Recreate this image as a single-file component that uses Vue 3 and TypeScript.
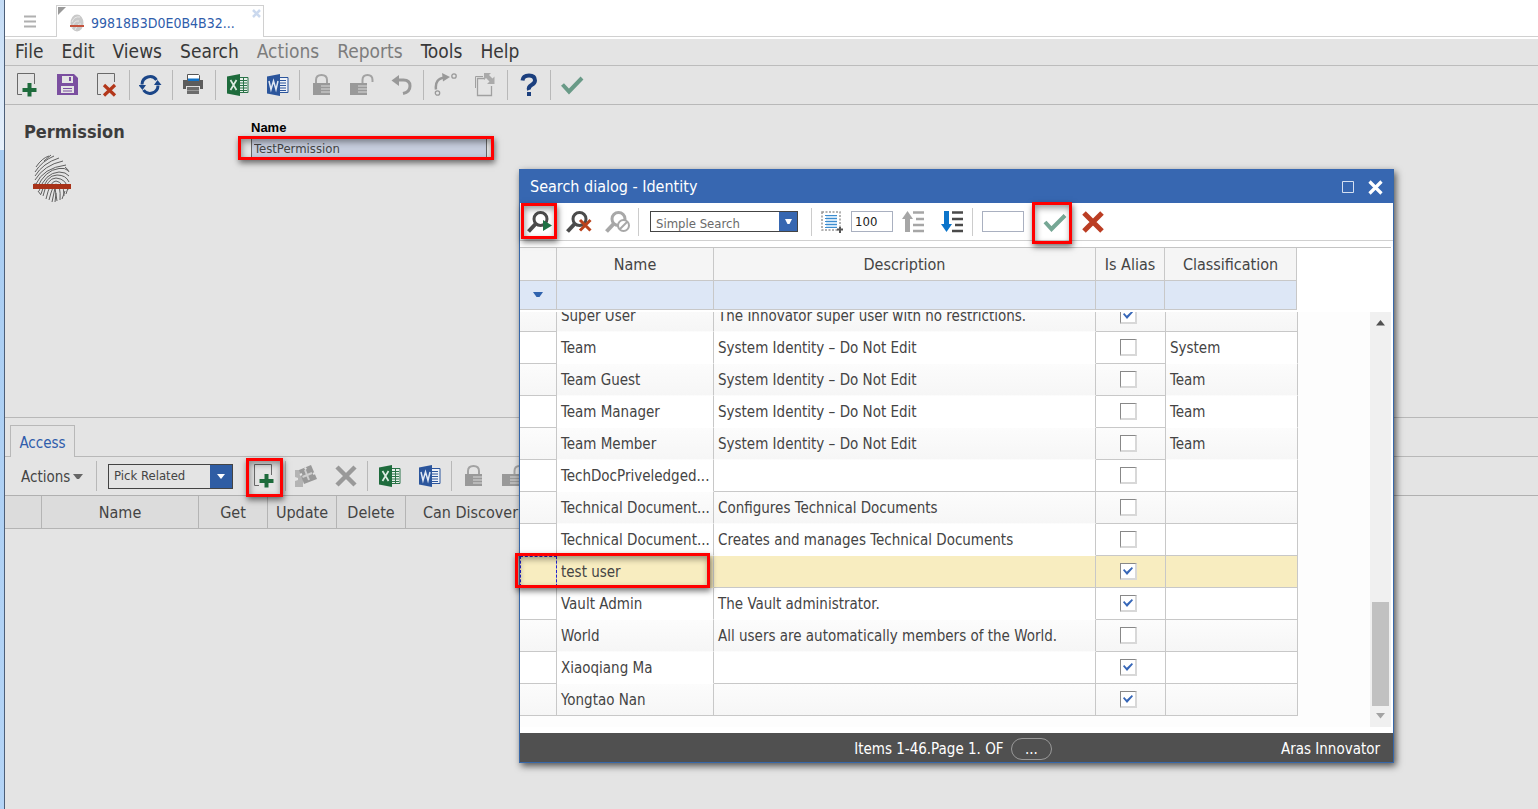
<script setup lang="ts">
import { ref } from 'vue'

interface ToolItem {
  icon?: string
  label?: string
  sep?: 'flush' | 'tight' | 'wide'
  disabled?: boolean
}

interface Identity {
  name: string
  description: string
  alias: boolean
  classification: string
  selected?: boolean
}

const menu = [
  { label: 'File', disabled: false },
  { label: 'Edit', disabled: false },
  { label: 'Views', disabled: false },
  { label: 'Search', disabled: false },
  { label: 'Actions', disabled: true },
  { label: 'Reports', disabled: true },
  { label: 'Tools', disabled: false },
  { label: 'Help', disabled: false },
]

const mainTools: ToolItem[] = [
  { icon: 'new', label: 'New' },
  { icon: 'save', label: 'Save' },
  { icon: 'delete', label: 'Delete' },
  { sep: 'tight' },
  { icon: 'refresh', label: 'Refresh' },
  { sep: 'tight' },
  { icon: 'print', label: 'Print' },
  { sep: 'wide' },
  { icon: 'excel', label: 'Export to Excel' },
  { icon: 'word', label: 'Export to Word' },
  { sep: 'wide' },
  { icon: 'lock', label: 'Lock', disabled: true },
  { icon: 'unlock', label: 'Unlock', disabled: true },
  { icon: 'undo', label: 'Undo', disabled: true },
  { sep: 'wide' },
  { icon: 'promote', label: 'Promote', disabled: true },
  { icon: 'revision', label: 'Revisions', disabled: true },
  { sep: 'tight' },
  { icon: 'help', label: 'Help' },
  { sep: 'tight' },
  { icon: 'check', label: 'Done' },
]

const relationTools: ToolItem[] = [
  { icon: 'new', label: 'New relationship' },
  { sep: 'flush' },
  { icon: 'pick', label: 'Pick related', disabled: true },
  { icon: 'remove', label: 'Remove', disabled: true },
  { sep: 'wide' },
  { icon: 'excel', label: 'Export to Excel' },
  { icon: 'word', label: 'Export to Word' },
  { sep: 'wide' },
  { icon: 'lock', label: 'Lock', disabled: true },
  { icon: 'unlock', label: 'Unlock', disabled: true },
]

const permissionName = ref('TestPermission')
const pageSize = ref('100')
const pageNumber = ref('')

const doNotEdit = 'System Identity – Do Not Edit'
const identities = ref<Identity[]>([
  { name: 'Super User', description: 'The Innovator super user with no restrictions.', alias: true, classification: '' },
  { name: 'Team', description: doNotEdit, alias: false, classification: 'System' },
  { name: 'Team Guest', description: doNotEdit, alias: false, classification: 'Team' },
  { name: 'Team Manager', description: doNotEdit, alias: false, classification: 'Team' },
  { name: 'Team Member', description: doNotEdit, alias: false, classification: 'Team' },
  { name: 'TechDocPriveledged...', description: '', alias: false, classification: '' },
  { name: 'Technical Document...', description: 'Configures Technical Documents', alias: false, classification: '' },
  { name: 'Technical Document...', description: 'Creates and manages Technical Documents', alias: false, classification: '' },
  { name: 'test user', description: '', alias: true, classification: '', selected: true },
  { name: 'Vault Admin', description: 'The Vault administrator.', alias: true, classification: '' },
  { name: 'World', description: 'All users are automatically members of the World.', alias: false, classification: '' },
  { name: 'Xiaoqiang Ma', description: '', alias: true, classification: '' },
  { name: 'Yongtao Nan', description: '', alias: true, classification: '' },
])
</script>

<template>
  <div class="page">
    <svg class="sprite" aria-hidden="true">
      <symbol id="i-new" viewBox="0 0 24 24">
        <path d="M6 21.500H1.500V.5H18.500V11" fill="none" stroke="#6a6a6a" />
        <path d="M11.500 10h4v5h5v4h-5v4.500h-4V19h-5v-4h5z" fill="#1e6b3c" />
      </symbol>
      <symbol id="i-save" viewBox="0 0 24 24">
        <path d="M1 1h17l4 4v17H1z" fill="#7b4fa0" />
        <path d="M6 3h11v7H6zM5 13h13v7H5z" fill="#e4e4e4" />
        <path d="M13 4h2v4h-2zM7 15h9v1H7zM7 17.500h9v1H7z" fill="#7b4fa0" />
      </symbol>
      <symbol id="i-delete" viewBox="0 0 24 24">
        <path d="M5 21.500H1.500V.5H18.500V9" fill="none" stroke="#6a6a6a" />
        <path d="M8 12l11 10.500M19 12L8 22.500" stroke="#b3371a" stroke-width="3.200" />
      </symbol>
      <symbol id="i-refresh" viewBox="0 0 24 24">
        <path d="M3 11.500a8 8 0 0 1 14.500-4.500M19 12.500a8 8 0 0 1-14.500 4.500" fill="none" stroke="#1b4688" stroke-width="3" />
        <path d="M-.5 12h7.500l-3.500 5zM22.500 12h-7.500l3.500-5z" fill="#1b4688" />
      </symbol>
      <symbol id="i-print" viewBox="0 0 24 24">
        <path d="M1 7h20v9h-3v-3H4v3H1z" fill="#5c5c5c" />
        <path d="M5.500 1.500h11l1 1v5h-12z" fill="#fff" stroke="#555" />
        <path d="M6 5.500h11v2.500H6z" fill="#1173c7" />
        <path d="M5 13h12v8H5z" fill="#6c6c6c" />
        <path d="M5 13.500h12" stroke="#ddd" />
        <path d="M5 17.500h12" stroke="#999" />
      </symbol>
      <symbol id="i-excel" viewBox="0 0 24 24">
        <path d="M13 4.500h9v15h-9z" fill="#e8f0ea" stroke="#2a7348" />
        <path d="M14 7.500h7M14 10h7M14 12.500h7M14 15h7M14 17.500h7M17.500 5v14" stroke="#2a7348" />
        <path d="M1 3.500L14 1v22L1 20.500z" fill="#1e6b3c" />
        <path d="M4.500 7l6 10M10.500 7l-6 10" stroke="#dcebe1" stroke-width="1.700" />
      </symbol>
      <symbol id="i-word" viewBox="0 0 24 24">
        <path d="M13 4.500h9v15h-9z" fill="#edf1f8" stroke="#2b559c" />
        <path d="M14 7.500h6M14 10h6M14 12.500h6M14 15h6M14 17.500h6" stroke="#2b559c" />
        <path d="M1 3.500L14 1v22L1 20.500z" fill="#2b559c" />
        <path d="M3 8l2 8.500L7.500 8l2.500 8.500L12 8" fill="none" stroke="#dfe7f3" stroke-width="1.500" />
      </symbol>
      <symbol id="i-lock" viewBox="0 0 24 24">
        <path d="M6 11V7q0-5 5.500-5T17 7v4" fill="none" stroke="#a3a3a3" stroke-width="2" />
        <path d="M3 10h17v12H3z" fill="#999" />
        <path d="M11 13h9M11 16h9M11 19h9" stroke="#d9d9d9" />
      </symbol>
      <symbol id="i-unlock" viewBox="0 0 24 24">
        <path d="M12.500 11V7q0-5 5-5t5 5v2" fill="none" stroke="#a3a3a3" stroke-width="2" />
        <path d="M0 10h17v12H0z" fill="#999" />
        <path d="M8 13h9M8 16h9M8 19h9" stroke="#d9d9d9" />
      </symbol>
      <symbol id="i-undo" viewBox="0 0 24 24">
        <path d="M7 7h6.500q6.500 0 6.500 6t-7 7.500" fill="none" stroke="#999" stroke-width="3" />
        <path d="M1.500 7.500L9 2v11z" fill="#999" />
      </symbol>
      <symbol id="i-promote" viewBox="0 0 24 24">
        <path d="M2 16.500Q.5 5.500 11 4.500" fill="none" stroke="#999" stroke-width="2.500" />
        <path d="M8 0l8 4-7 4.500z" fill="#999" />
        <circle cx="3.500" cy="20" r="2.200" fill="none" stroke="#999" stroke-width="1.300" />
        <circle cx="20" cy="3" r="2.200" fill="none" stroke="#999" stroke-width="1.300" />
      </symbol>
      <symbol id="i-revision" viewBox="0 0 24 24">
        <path d="M1.500 15V3.500H9" fill="none" stroke="#a0a0a0" />
        <path d="M11 5.500H3.500v17h14V13" fill="none" stroke="#a0a0a0" stroke-width="1.300" />
        <path d="M10 0h7l-2 2 3.500 3.500 2-2V11h-7.500l2.500-2.500-3.500-3.500-2 2z" fill="#aaa" />
      </symbol>
      <symbol id="i-help" viewBox="0 0 24 24">
        <path d="M5.500 7.500Q6 2.500 12 2.500t6 5q0 2.500-3.500 4.500T12 17" fill="none" stroke="#1b3f7e" stroke-width="4" />
        <path d="M10 19h4v4h-4z" fill="#1b3f7e" />
      </symbol>
      <symbol id="i-check" viewBox="0 0 24 24">
        <path d="M2.500 11.500l6.500 7L22 5" fill="none" stroke="#699a87" stroke-width="4" />
      </symbol>
      <symbol id="i-pick" viewBox="0 0 24 24">
        <path d="M1 6h8v17H1v-6l3-1v-2l-3-1z" fill="#b4b4b4" />
        <path d="M5 6l12-5 6 14-13 5z" fill="#999" />
        <path d="M11 6l4 10M8.500 13l9.500-4" stroke="#cfcfcf" stroke-width="2" />
        <path d="M11 3.500l1 2M21 9l-2 1M6 11l2-1" stroke="#e4e4e4" stroke-width="2" />
      </symbol>
      <symbol id="i-remove" viewBox="0 0 24 24">
        <path d="M3 3l18 18M21 3L3 21" stroke="#999" stroke-width="4.500" />
      </symbol>
      <symbol id="i-finger" viewBox="0 0 40 50">
        <g fill="none" stroke="#5f5f5f">
          <path d="M4 13Q10 4 17 2M3 18Q10 7 22 2M3 22Q11 9 27 4M3 26Q12 11 31 7M4 30Q11 14 34 11M5 34Q13 16 27 14.500q6-1 9 2" />
          <path d="M7 37q6-18 20-19 7 0 10 4M9 40q5-19 16-19 9 0 12 7M11 42q4-18 13-18 11 1 12 12M14 45q4-18 10-18 8 1 8 15M17 46q4-16 7-16 5 1 4 16M20 48l3-14 2 13" />
          <path d="M12 7l7-6M33 13q3 2 4 5M3 29v5M9 41l-3-4M30 45l3-8M23 48l1-9M34 40l2-6" />
        </g>
        <path d="M1 30h38v5H1z" fill="#a83218" />
      </symbol>
      <symbol id="i-mag" viewBox="0 0 26 24">
        <circle cx="13.500" cy="9" r="6.500" fill="none" stroke="currentColor" stroke-width="3" />
        <path d="M9 13.500L1.500 21.500" stroke="currentColor" stroke-width="4" />
      </symbol>
    </svg>

    <div class="edge"></div>

    <main class="window">
      <header class="tabs">
        <button class="burger" aria-label="Menu">
          <svg width="12" height="13"><path d="M0 1.500h12M0 6.500h12M0 11.500h12" stroke="#b0b0b0" stroke-width="2" /></svg>
        </button>
        <div class="tab">
          <svg class="tab-finger" width="16" height="18" viewBox="0 0 16 18">
            <ellipse cx="8" cy="9" rx="6.500" ry="8.500" fill="#c9c9c9" />
            <path d="M3 8q2-6 8-5M3 14q2-8 7-7M6 16q3-7 6-6" fill="none" stroke="#e9e9e9" />
            <path d="M1 11h14v2H1z" fill="#c4533d" />
          </svg>
          <a href="#" class="tab-title">99818B3D0E0B4B32...</a>
          <button class="tab-close" aria-label="Close tab">
            <svg width="9" height="9"><path d="M1 1l7 7M8 1L1 8" stroke="#cbd9ee" stroke-width="2.500" /></svg>
          </button>
        </div>
      </header>

      <nav class="menu">
        <button v-for="m in menu" :key="m.label" :disabled="m.disabled">{{ m.label }}</button>
      </nav>

      <div class="tools main-tools">
        <template v-for="(t, i) in mainTools" :key="i">
          <span v-if="t.sep" class="sep" :class="t.sep"></span>
          <button v-else class="tool" :aria-label="t.label" :disabled="t.disabled">
            <svg width="24" height="24"><use :href="'#i-' + t.icon" /></svg>
          </button>
        </template>
      </div>

      <section class="form">
        <div class="form-title">
          <h1>Permission</h1>
          <svg width="40" height="50"><use href="#i-finger" /></svg>
        </div>
        <div class="field">
          <label for="perm-name">Name</label>
          <div class="field-box">
            <input id="perm-name" v-model="permissionName" type="text" />
            <span class="mark mark-name"></span>
          </div>
        </div>
      </section>

      <section class="relations">
        <div class="rel-tabs"><button class="rel-tab">Access</button></div>
        <div class="rel-bar">
          <button class="actions">Actions
            <svg width="10" height="6"><path d="M0 0h10L6 5H4z" fill="#666" /></svg>
          </button>
          <span class="sep rel-sep"></span>
          <span class="select rel-select">
            <select aria-label="Relationship mode"><option>Pick Related</option></select>
            <span class="arrow"><svg width="8" height="5"><path d="M0 0h8L4 5z" fill="#fff" /></svg></span>
          </span>
          <div class="tools rel-tools">
            <template v-for="(t, i) in relationTools" :key="i">
              <span v-if="t.sep" class="sep" :class="t.sep"></span>
              <button v-else class="tool" :aria-label="t.label" :disabled="t.disabled">
                <svg width="24" height="24"><use :href="'#i-' + t.icon" /></svg>
                <span v-if="i === 0" class="mark mark-add"></span>
              </button>
            </template>
          </div>
        </div>
        <table class="rel-grid">
          <colgroup><col class="r0" /><col class="r1" /><col class="r2" /><col class="r2" /><col class="r2" /><col class="r3" /></colgroup>
          <thead>
            <tr><th></th><th>Name</th><th>Get</th><th>Update</th><th>Delete</th><th>Can Discover</th></tr>
          </thead>
        </table>
      </section>
    </main>

    <section class="dialog" role="dialog" aria-labelledby="dlg-title">
      <header class="dlg-head">
        <h2 id="dlg-title">Search dialog - Identity</h2>
        <button aria-label="Maximize"><svg width="12" height="12"><path d="M.5.5h11v11H.5z" fill="none" stroke="#d5e0f1" /></svg></button>
        <button aria-label="Close"><svg width="15" height="15"><path d="M1.500 1.500l12 12M13.500 1.500l-12 12" stroke="#fff" stroke-width="3.200" /></svg></button>
      </header>

      <div class="dlg-tools">
        <button class="mag" aria-label="Run search">
          <svg width="26" height="24"><use href="#i-mag" /><path d="M16 10l9 5.500-9 5.500z" fill="#1e7145" /></svg>
          <span class="mark mark-search"></span>
        </button>
        <button class="mag" aria-label="Clear search">
          <svg width="26" height="24"><use href="#i-mag" /><path d="M14 10l10.500 10.500M24.500 10L14 20.500" stroke="#b9421c" stroke-width="3" /></svg>
        </button>
        <button class="mag off" aria-label="Stop search" disabled>
          <svg width="26" height="24">
            <use href="#i-mag" />
            <circle cx="18.500" cy="15.500" r="5.500" fill="#fff" stroke="#a8a8a8" stroke-width="2" />
            <path d="M15 19l7-7" stroke="#a8a8a8" stroke-width="2" />
          </svg>
        </button>
        <span class="dsep s1"></span>
        <span class="select dlg-select">
          <select aria-label="Search mode"><option>Simple Search</option></select>
          <span class="arrow"><svg width="7" height="5"><path d="M0 0h7L4.500 5h-2z" fill="#fff" /></svg></span>
        </span>
        <span class="dsep s2"></span>
        <svg class="page-icon" width="22" height="22">
          <path d="M1 1h18v18H1z" fill="none" stroke="#999" stroke-width="1.500" stroke-dasharray="2 1.500" />
          <path d="M5 4h11v13H5z" fill="#cfe5f7" />
          <path d="M4 4.500h12M4 7.500h12M4 10.500h12M4 13.500h12M4 16.500h12" stroke="#3d8dcf" />
          <path d="M16 18.500h6M19 16v6" stroke="#555" stroke-width="2" />
        </svg>
        <input v-model="pageSize" class="size" type="text" aria-label="Page size" />
        <button class="prev" aria-label="Previous page" disabled>
          <svg width="22" height="22"><path d="M5.500 0L11 8H8v13H3V8H0z" fill="#a6a6a6" /><path d="M11 1.500h11M14 8h8M11 14h11M11 20h11" stroke="#a6a6a6" stroke-width="2.500" /></svg>
        </button>
        <button class="next" aria-label="Next page">
          <svg width="22" height="22"><path d="M5.500 21L11 13H8V0H3v13H0z" fill="#0b74ca" /><path d="M11 1.500h11M11 8h11M14 14h8M11 20h11" stroke="#4a4a4a" stroke-width="2.500" /></svg>
        </button>
        <span class="dsep s3"></span>
        <input v-model="pageNumber" class="size" type="text" aria-label="Page number" />
        <button class="ok" aria-label="Accept">
          <svg width="24" height="24"><path d="M2 12l6.500 7L22 5.500" fill="none" stroke="#76a795" stroke-width="4" /></svg>
          <span class="mark mark-ok"></span>
        </button>
        <button class="cancel" aria-label="Cancel">
          <svg width="22" height="22"><path d="M2 2l18 18M20 2L2 20" stroke="#bb3d23" stroke-width="5" /></svg>
        </button>
      </div>

      <div class="grid-head">
        <table class="grid">
          <colgroup><col class="c0" /><col class="c1" /><col class="c2" /><col class="c3" /><col class="c4" /></colgroup>
          <thead>
            <tr><th></th><th>Name</th><th>Description</th><th>Is Alias</th><th>Classification</th></tr>
            <tr class="filter">
              <td><svg width="10" height="6"><path d="M0 0h10L6.500 5h-3z" fill="#2f63ae" /></svg></td>
              <td></td><td></td><td></td><td></td>
            </tr>
          </thead>
        </table>
      </div>

      <div class="grid-body">
        <div class="rows">
          <table class="grid">
            <colgroup><col class="c0" /><col class="c1" /><col class="c2" /><col class="c3 b" /><col class="c4" /></colgroup>
            <tbody>
              <tr v-for="(r, i) in identities" :key="i" :class="{ selected: r.selected }">
                <td></td>
                <td class="text">{{ r.name }}</td>
                <td :class="{ text: r.description }">{{ r.description }}</td>
                <td class="tick"><input v-model="r.alias" type="checkbox" :aria-label="r.name + ' is alias'" /></td>
                <td :class="{ text: r.classification }">{{ r.classification }}</td>
              </tr>
            </tbody>
          </table>
        </div>
        <div class="scroll">
          <svg width="9" height="6"><path d="M0 5.500L4.500 0 9 5.500z" fill="#505050" /></svg>
          <span class="thumb"></span>
          <svg width="9" height="6"><path d="M0 0h9L4.500 5.500z" fill="#a3a3a3" /></svg>
        </div>
        <span class="mark mark-row"></span>
      </div>

      <footer class="dlg-foot">
        <span></span>
        <span class="pager">Items 1-46.Page 1. OF <button aria-label="More pages">...</button></span>
        <span class="brand">Aras Innovator</span>
      </footer>
    </section>
  </div>
</template>

<style>
body {
  margin: 0;
}
</style>

<style scoped>
* {
  box-sizing: border-box;
}
.page {
  position: relative;
  display: flex;
  min-height: 100vh;
  overflow: hidden;
  background: #e4e4e4;
  color: #444;
  font: 15px/20px Tahoma, "DejaVu Sans Condensed", "Noto Sans", sans-serif;
}
.sprite {
  position: absolute;
  width: 0;
  height: 0;
}
button,
input,
select {
  margin: 0;
  padding: 0;
  border: 0;
  border-radius: 0;
  background: none;
  color: inherit;
  font: inherit;
}
button {
  position: relative;
  flex: none;
}
svg {
  display: block;
}
.edge {
  flex: none;
  width: 5px;
  border-right: 1px solid #4d5f78;
  background: linear-gradient(#c3dbf5 0, #e6f0fb 150px, #a9cdf2 150px, #b4d4f6 100%);
}
.window {
  display: flex;
  flex: 1;
  flex-direction: column;
  min-width: 0;
}

.tabs {
  display: flex;
  align-items: flex-end;
  height: 39px;
  padding-bottom: 2px;
  background: #fff;
}
.tabs::after {
  content: "";
  flex: 1;
  border-bottom: 1px solid #d0d0d0;
}
.burger {
  display: flex;
  align-items: center;
  width: 51px;
  height: 31px;
  padding-left: 19px;
  border-bottom: 1px solid #d0d0d0;
}
.tab {
  position: relative;
  display: flex;
  align-items: center;
  width: 208px;
  height: 32px;
  padding: 2px 0 0 12px;
  border: 1px solid #d0d0d0;
  border-bottom: 0;
}
.tab::before {
  content: "";
  position: absolute;
  top: 1px;
  left: 1px;
  border: 4px solid #999;
  border-right-color: transparent;
  border-bottom-color: transparent;
}
.tab-title {
  padding-left: 6px;
  color: #2f5dab;
  font-size: 14px;
  text-decoration: none;
}
.tab-close {
  position: absolute;
  top: 3px;
  right: 2px;
}

.menu {
  display: flex;
  gap: 18px;
  height: 27px;
  padding-left: 10px;
  border-bottom: 1px solid #bcbcbc;
  font-size: 19px;
  line-height: 24px;
}
.menu button {
  height: 24px;
  color: #383838;
}
.menu button:disabled {
  color: #7d7d7d;
}

.tools {
  display: flex;
  align-items: center;
}
.main-tools {
  height: 39px;
  padding-left: 3px;
  border-bottom: 1px solid #b8b8b8;
}
.tool {
  margin: 0 8px;
}
.sep {
  flex: none;
  width: 1px;
  height: 30px;
  background: #b8b8b8;
}
.sep.tight {
  margin: 0 1px;
}
.sep.wide {
  margin: 0 2px 0 1px;
}

.form {
  display: grid;
  grid-template-columns: 227px 244px;
  align-items: start;
  min-height: 312px;
  padding: 13px 0 0 19px;
}
h1 {
  margin: 0 0 9px;
  color: #3c3c3c;
  font-size: 18px;
  line-height: 27px;
}
.form-title svg {
  margin-left: 8px;
}
.field label {
  display: block;
  padding-bottom: 1px;
  color: #000;
  font: bold 13px/19px Tahoma, "Liberation Sans", sans-serif;
}
.field-box {
  position: relative;
}
.field-box input {
  display: block;
  width: 236px;
  height: 21px;
  padding: 0 2px;
  border: 1px solid #666;
  background: #c6cddd;
  font-size: 13px;
}

.mark {
  position: absolute;
  z-index: 3;
  border: 3px solid #f00;
  box-shadow: 1px 3px 6px rgba(0, 0, 0, 0.55), inset 1px 3px 6px rgba(0, 0, 0, 0.4);
  pointer-events: none;
}
.mark-name {
  top: -2px;
  left: -13px;
  width: 256px;
  height: 24px;
}
.mark-add {
  top: -6px;
  left: -7px;
  width: 37px;
  height: 39px;
}

.relations {
  flex: 1;
  border-top: 1px solid #b8b8b8;
}
.rel-tabs {
  display: flex;
  align-items: flex-end;
  height: 39px;
}
.rel-tabs::before,
.rel-tabs::after {
  content: "";
  width: 5px;
  border-bottom: 1px solid #b8b8b8;
}
.rel-tabs::after {
  flex: 1;
}
.rel-tab {
  width: 65px;
  height: 32px;
  padding-top: 2px;
  border: 1px solid #b8b8b8;
  border-bottom: 0;
  color: #2f5dab;
}
.rel-bar {
  display: flex;
  align-items: center;
  height: 39px;
  border-bottom: 1px solid #b0b0b0;
}
.actions {
  display: flex;
  align-items: center;
  justify-content: space-between;
  width: 78px;
  padding: 2px 0 0 16px;
}
.rel-sep {
  margin: 0 11px 0 13px;
}
.select {
  position: relative;
  display: block;
  flex: none;
}
.select select {
  display: block;
  appearance: none;
  width: 100%;
  height: 100%;
  padding-left: 5px;
  border: 1px solid #444;
  font-size: 13px;
}
.select .arrow {
  position: absolute;
  top: 1px;
  right: 1px;
  bottom: 1px;
  display: flex;
  align-items: center;
  justify-content: center;
  width: 22px;
  background: #2f5da4;
  pointer-events: none;
}
.rel-select {
  width: 125px;
  height: 25px;
}
.rel-tools {
  padding-left: 12px;
}
.rel-grid {
  table-layout: fixed;
  width: 531px;
  border-spacing: 0;
  background: #dcdcdc;
}
.rel-grid th {
  height: 33px;
  padding: 2px 0 0;
  border-right: 1px solid #b4b4b4;
  border-bottom: 1px solid #b4b4b4;
  font-size: 16px;
  font-weight: normal;
  white-space: nowrap;
}
.r0 {
  width: 37px;
}
.r1 {
  width: 157px;
}
.r2 {
  width: 69px;
}
.r3 {
  width: 130px;
}

.dialog {
  position: absolute;
  top: 169px;
  left: 519px;
  z-index: 2;
  width: 875px;
  border: 1px solid #3767a8;
  border-top: 0;
  background: #fff;
  box-shadow: 2px 3px 7px rgba(0, 0, 0, 0.65);
}
.dlg-head {
  display: flex;
  align-items: center;
  gap: 14px;
  height: 34px;
  padding: 2px 10px 0;
  background: #3767b1;
  color: #fff;
}
h2 {
  flex: 1;
  margin: 0;
  font-size: 16px;
  font-weight: normal;
}
.dlg-tools {
  display: flex;
  align-items: center;
  height: 38px;
  padding-left: 7px;
  border-bottom: 1px solid #d0d0d0;
}
.mag {
  margin-right: 13px;
  color: #4b4b4b;
}
.mag.off {
  margin-right: 7px;
  color: #a8a8a8;
}
.mark-search {
  top: -7px;
  left: -6px;
  width: 36px;
  height: 36px;
}
.dsep {
  flex: none;
  width: 1px;
  height: 28px;
  background: #ccc;
}
.s1 {
  margin-right: 11px;
}
.s2 {
  margin: 0 9px 0 13px;
}
.s3 {
  margin: 0 9px;
}
.dlg-select {
  width: 148px;
  height: 21px;
  color: #6a6a6a;
}
.dlg-select select {
  padding-top: 2px;
}
.dlg-select .arrow {
  width: 18px;
  background: #3767b1;
}
.page-icon {
  margin-right: 8px;
}
.size {
  width: 42px;
  height: 21px;
  padding: 0 3px;
  border: 1px solid #a9b0c0;
  color: #222;
  font-size: 13px;
}
.prev {
  margin: 0 17px 0 9px;
}
.ok {
  margin: 0 15px 0 19px;
}
.mark-ok {
  top: -8px;
  left: -11px;
  width: 40px;
  height: 42px;
}

.grid-head {
  margin: 6px 2px 2px 0;
  border-top: 1px solid #c4c4c4;
}
.grid {
  table-layout: fixed;
  width: 777px;
  border-spacing: 0;
}
.rows .grid {
  width: 778px;
  margin-top: -12px;
}
.c0 {
  width: 37px;
}
.c1 {
  width: 157px;
}
.c2 {
  width: 382px;
}
.c3 {
  width: 69px;
}
.c3.b {
  width: 70px;
}
.c4 {
  width: 132px;
}
.grid th,
.grid td {
  padding: 0;
  border-right: 1px solid #c8c8c8;
  border-bottom: 1px solid #c8c8c8;
  white-space: nowrap;
}
.grid th {
  height: 33px;
  padding-top: 2px;
  background: #f5f5f5;
  font-size: 16px;
  font-weight: normal;
}
.grid .filter td {
  height: 29px;
  background: #dde7f6;
}
.filter svg {
  margin: 0 auto;
}
.grid tbody td {
  position: relative;
  height: 32px;
  padding: 0 4px;
}
.grid tbody tr:nth-child(odd) td {
  background: linear-gradient(#fcfcfc, #f6f6f6);
}
.grid tbody tr:nth-child(even) td {
  background: #fff;
}
.grid tbody tr td.text {
  border-bottom-color: transparent;
}
.grid tbody tr:last-child td {
  border-bottom-color: #c8c8c8;
}
.grid tbody tr.selected td {
  background: #f8edc0;
}
.selected td:first-child::after {
  content: "";
  position: absolute;
  top: 0;
  right: -1px;
  bottom: 0;
  left: 0;
  border: 1px dashed #22c;
}
.mark-row {
  top: 241px;
  left: -5px;
  width: 195px;
  height: 35px;
}
.grid tbody td.tick {
  padding: 0 24px;
}
.tick input {
  display: grid;
  place-items: center;
  appearance: none;
  width: 17px;
  height: 17px;
  border: 1px solid #888;
  border-right: 2px solid #d8d8d8;
  border-bottom: 2px solid #d8d8d8;
  background: #fff;
}
.tick input:checked::before {
  content: "";
  width: 10px;
  height: 8px;
  background: #3767b8;
  clip-path: polygon(0 40%, 12% 25%, 38% 60%, 88% 0, 100% 15%, 40% 100%);
}
.grid-body {
  position: relative;
  display: flex;
  height: 415px;
  margin: 0 2px 6px 0;
  background: #fdfdfd;
}
.rows {
  flex: 1;
  overflow: hidden;
}
.scroll {
  display: flex;
  flex-direction: column;
  align-items: center;
  width: 21px;
  padding: 8px 0;
  background: #f0f0f0;
}
.thumb {
  width: 17px;
  height: 104px;
  margin: auto 0 7px;
  background: #c1c1c1;
}
.dlg-foot {
  display: grid;
  grid-template-columns: 1fr auto 1fr;
  align-items: center;
  height: 29px;
  padding: 2px 13px 0 6px;
  background: #505050;
  color: #fff;
}
.pager button {
  width: 41px;
  height: 22px;
  margin-left: 3px;
  border: 1px solid #999;
  border-radius: 11px;
  line-height: 20px;
}
.brand {
  text-align: right;
}
</style>
